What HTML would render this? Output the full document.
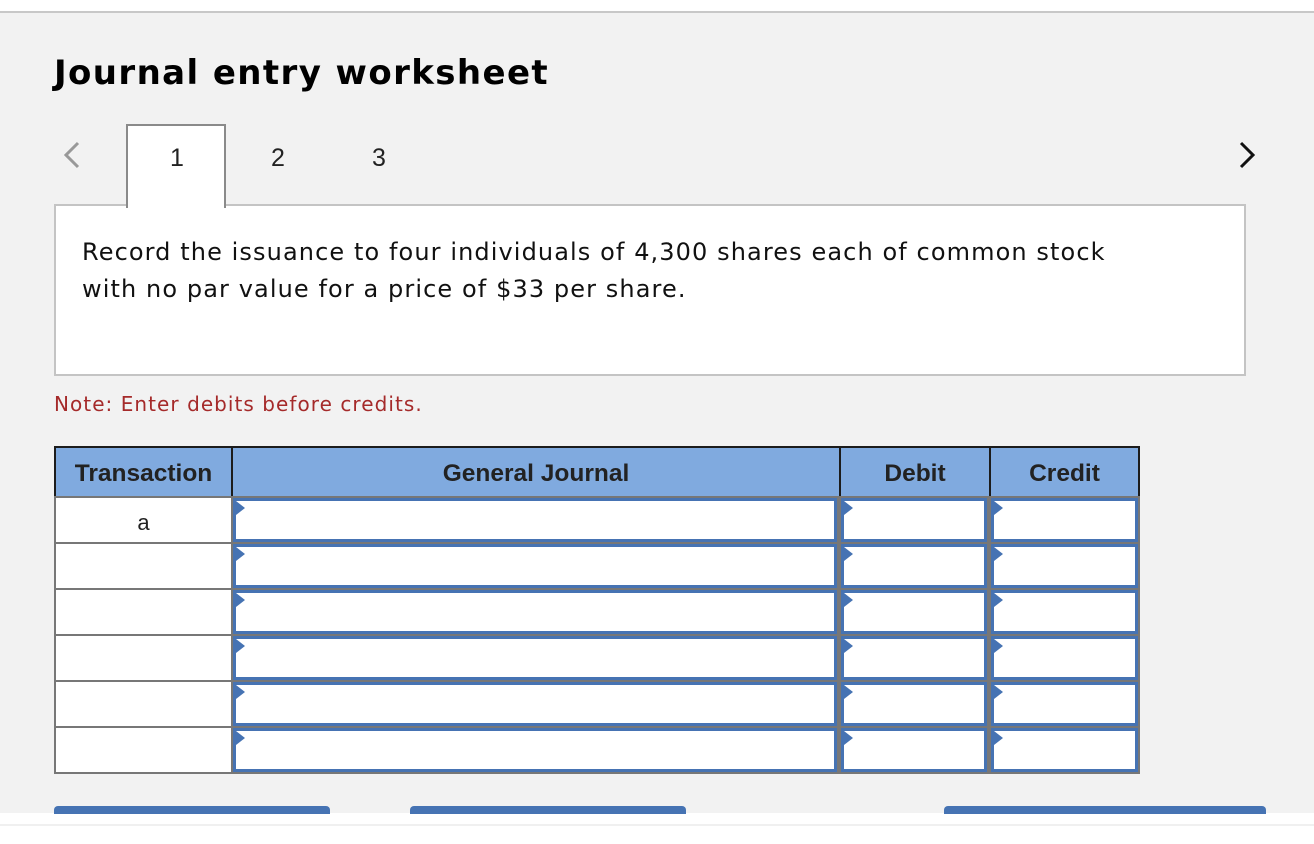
<!DOCTYPE html>
<html><head><style>
body{margin:0;width:1314px;height:844px;background:#fff;position:relative;overflow:hidden;font-family:"Liberation Sans",sans-serif;}
.a{position:absolute}
.bg{left:0;top:11px;width:1314px;height:802px;background:#f2f2f2;border-top:2px solid #c8c8c8;box-sizing:border-box}
h1{position:absolute;left:54px;top:53px;margin:0;font-family:"DejaVu Sans",sans-serif;font-weight:bold;font-size:34px;color:#000;letter-spacing:1.4px}
.tab{left:126px;top:124px;width:100px;height:84px;background:#fff;border:2px solid #8a8a8a;border-bottom:none;box-sizing:border-box}
.num{font-size:25px;color:#222}
.box{left:54px;top:204px;width:1192px;height:172px;background:#fff;border:2px solid #c4c4c4;box-sizing:border-box}
.q{left:82px;top:234px;font-family:"DejaVu Sans",sans-serif;font-size:24px;line-height:37px;color:#111;letter-spacing:1.1px;white-space:nowrap}
.note{left:54px;top:392px;font-family:"DejaVu Sans",sans-serif;font-size:20px;color:#a52a2a;letter-spacing:1.05px}
.th{background:#80aadf;border:2px solid #1c1c1c;box-sizing:border-box;font-weight:bold;font-size:24.5px;color:#222;text-align:center;line-height:52px}
.td{background:#fff;border:2px solid #777;box-sizing:border-box}
.in{background:#fff;border:3px solid #4673b3;box-sizing:border-box;outline:2px solid #777}
.tri{position:absolute;left:0;top:0;width:0;height:0;border-top:7px solid transparent;border-bottom:7px solid transparent;border-left:9px solid #4673b3}
.btn{top:806px;height:8px;background:#4673b3;border-radius:4px 4px 0 0}
</style></head><body>
<div class="a bg"></div>
<h1>Journal entry worksheet</h1>
<svg class="a" style="left:60px;top:140px" width="24" height="30"><path d="M18 3 L6 15 L18 27" stroke="#999" stroke-width="3" fill="none"/></svg>
<svg class="a" style="left:1236px;top:140px" width="24" height="30"><path d="M5 3 L17 15 L5 27" stroke="#111" stroke-width="3" fill="none"/></svg>
<div class="a box"></div>
<div class="a tab"></div>
<div class="a num" style="left:170px;top:144px">1</div>
<div class="a num" style="left:271px;top:144px">2</div>
<div class="a num" style="left:372px;top:144px">3</div>
<div class="a q">Record the issuance to four individuals of 4,300 shares each of common stock<br>with no par value for a price of $33 per share.</div>
<div class="a note">Note: Enter debits before credits.</div>
<div class="a th" style="left:54px;top:446px;width:179px;height:52px">Transaction</div>
<div class="a th" style="left:231px;top:446px;width:610px;height:52px">General Journal</div>
<div class="a th" style="left:839px;top:446px;width:152px;height:52px">Debit</div>
<div class="a th" style="left:989px;top:446px;width:151px;height:52px">Credit</div>
<div id="rows"></div>
<script>
var h='';for(var i=0;i<6;i++){var y=496+i*46;
h+='<div class="a td" style="left:54px;top:'+y+'px;width:179px;height:48px;text-align:center;font-size:22px;line-height:50px;color:#222">'+(i==0?'a':'')+'</div>';
[[233,604],[841,146],[991,147]].forEach(function(c){h+='<div class="a in" style="left:'+c[0]+'px;top:'+(y+2)+'px;width:'+c[1]+'px;height:44px"><div class="tri"></div></div>';});}
document.getElementById('rows').innerHTML=h;
</script>
<div class="a btn" style="left:54px;width:276px"></div>
<div class="a btn" style="left:410px;width:276px"></div>
<div class="a btn" style="left:944px;width:322px"></div>
<div class="a" style="left:0;top:824px;width:1314px;height:2px;background:#f0f0f0"></div>
</body></html>
